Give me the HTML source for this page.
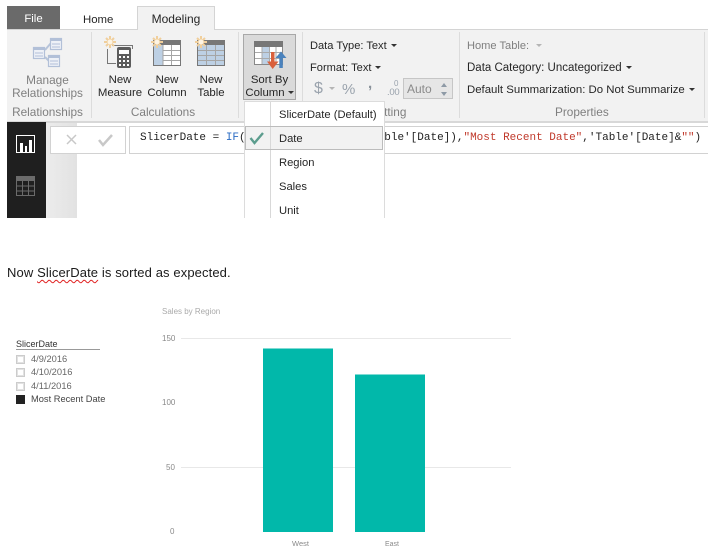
<!DOCTYPE html>
<html><head><meta charset="utf-8">
<style>
html,body{margin:0;padding:0;background:#fff;}
#p{position:relative;width:720px;height:555px;overflow:hidden;background:#fff;font-family:"Liberation Sans",sans-serif;font-size:11.4px;color:#262626;}
#p div{position:absolute;white-space:nowrap;}
.c{text-align:center;line-height:13px;}
.car{display:inline-block;width:0;height:0;border-left:3px solid transparent;border-right:3px solid transparent;border-top:3px solid #333;vertical-align:2px;margin-left:4px;}
.g{color:#7f7f7f;}
.ax{font-size:8px;color:#8a8a8a;}
.m{font-size:11.2px;z-index:5;}
.s{font-size:9.3px;color:#666;}
.b{width:9px;height:9px;border:1px solid #ccc;box-sizing:border-box;box-shadow:inset 0 0 0 1px #e2e2e2;}
svg{position:absolute;}
</style></head><body><div id="p">

<!-- tabs -->
<div style="left:7px;top:6px;width:53px;height:23px;background:#6a6a6a;color:#fff;line-height:26px;text-align:center;">File</div>
<div style="left:83px;top:14px;">Home</div>
<div style="left:137px;top:6px;width:78px;height:24px;background:#f2f2f2;border:1px solid #d4d4d4;border-bottom:none;box-sizing:border-box;line-height:25px;text-align:center;z-index:2;font-size:12px;">Modeling</div>

<!-- ribbon -->
<div style="left:7px;top:29px;width:701px;height:92px;background:#f2f2f2;border-top:1px solid #d4d4d4;box-sizing:border-box;"></div>
<div style="left:7px;top:121px;width:701px;height:2px;background:#d8d8d8;"></div>
<div style="left:91px;top:32px;width:1px;height:86px;background:#dcdcdc;"></div>
<div style="left:238px;top:32px;width:1px;height:86px;background:#dcdcdc;"></div>
<div style="left:302px;top:32px;width:1px;height:86px;background:#dcdcdc;"></div>
<div style="left:459px;top:32px;width:1px;height:86px;background:#dcdcdc;"></div>
<div style="left:704px;top:32px;width:1px;height:86px;background:#dcdcdc;"></div>

<!-- manage relationships icon -->
<svg style="left:30px;top:36px" width="36" height="34" viewBox="0 0 36 34">
<path d="M15 14 L21 7 M15 21 L20 26" stroke="#b7c4da" stroke-width="2" fill="none"/>
<g fill="#eef1f7" stroke="#b2c0d8" stroke-width="1.2">
<rect x="3.500" y="11.500" width="11" height="11"/><rect x="20.500" y="2.500" width="11" height="11"/><rect x="18.500" y="19.500" width="11" height="11"/></g>
<g fill="#b2c0d8"><rect x="3" y="11" width="12" height="3"/><rect x="20" y="2" width="12" height="3"/><rect x="18" y="19" width="12" height="3"/></g>
<path d="M5 17h8M5 20h8M22 8h8M22 11h8M20 25h8M20 28h8" stroke="#b2c0d8" stroke-width="1"/>
</svg>
<div class="c g" style="left:10px;top:74px;width:75px;font-size:11.8px;">Manage<br>Relationships</div>
<div class="c g" style="left:10px;top:106px;width:75px;font-size:11.8px;">Relationships</div>

<!-- new measure -->
<svg style="left:103px;top:35px" width="32" height="35" viewBox="0 0 32 35">
<path d="M4.500 14V28.500H13M9 10.500H29.500V14" fill="none" stroke="#777" stroke-width="1"/>
<rect x="14" y="12" width="14" height="21" rx="2" fill="#5c5c5c"/>
<rect x="16" y="15" width="10" height="4" fill="#fff"/>
<g fill="#fff"><rect x="16" y="21" width="2" height="2"/><rect x="20" y="21" width="2" height="2"/><rect x="24" y="21" width="2" height="2"/><rect x="16" y="25" width="2" height="2"/><rect x="20" y="25" width="2" height="2"/><rect x="24" y="25" width="2" height="2"/><rect x="16" y="29" width="2" height="2"/><rect x="20" y="29" width="2" height="2"/><rect x="24" y="29" width="2" height="2"/></g>
<g stroke="#f0cf9c" stroke-width="2" fill="none"><path d="M7 1V13M1 7H13M3 3L11 11M11 3L3 11"/></g><circle cx="7" cy="7" r="2.500" fill="#fdf4e4"/>
</svg>
<div class="c" style="left:96px;top:74px;width:48px;">New<br>Measure</div>

<!-- new column -->
<svg style="left:150px;top:35px" width="32" height="35" viewBox="0 0 32 35">
<rect x="3.500" y="5.500" width="27" height="25" fill="#fff" stroke="#777" stroke-width="1"/>
<rect x="3" y="5" width="28" height="5" fill="#777"/>
<rect x="4" y="10" width="9" height="20" fill="#bdd0e4"/>
<path d="M13 15.500H30M13 20.500H30M13 25.500H30M21.500 10V30M13 10V30" stroke="#a5a5a5" stroke-width="1"/>
<g stroke="#f0cf9c" stroke-width="2" fill="none"><path d="M7 1V13M1 7H13M3 3L11 11M11 3L3 11"/></g><circle cx="7" cy="7" r="2.500" fill="#fdf4e4"/>
</svg>
<div class="c" style="left:146px;top:74px;width:42px;">New<br>Column</div>

<!-- new table -->
<svg style="left:194px;top:35px" width="32" height="35" viewBox="0 0 32 35">
<rect x="3.500" y="5.500" width="27" height="25" fill="#bdd0e4" stroke="#777" stroke-width="1"/>
<rect x="3" y="5" width="28" height="5" fill="#777"/>
<path d="M4 15.500H30M4 20.500H30M4 25.500H30M12.500 10V30M21.500 10V30" stroke="#a5a5a5" stroke-width="1"/>
<g stroke="#f0cf9c" stroke-width="2" fill="none"><path d="M7 1V13M1 7H13M3 3L11 11M11 3L3 11"/></g><circle cx="7" cy="7" r="2.500" fill="#fdf4e4"/>
</svg>
<div class="c" style="left:190px;top:74px;width:42px;">New<br>Table</div>
<div class="c g" style="left:96px;top:106px;width:134px;font-size:11.8px;">Calculations</div>

<!-- sort by column -->
<div style="left:243px;top:34px;width:53px;height:66px;background:#dadada;border:1px solid #a8a8a8;box-sizing:border-box;"></div>
<svg style="left:250px;top:38px" width="44" height="36" viewBox="0 0 44 36">
<rect x="4.500" y="3.500" width="28" height="23" fill="#fff" stroke="#888"/>
<rect x="4" y="3" width="29" height="6" fill="#777"/>
<rect x="12" y="9" width="7" height="17" fill="#bdd0e4"/>
<path d="M5 14.500H32M5 20.500H32M12 9V26M19.500 9V26M26 9V26" stroke="#aaa"/>
<path d="M21 14H24.500V23.500H28.500L22.700 31L17 23.500H21Z" fill="#d9603c"/>
<path d="M29.300 30H32.800V20H36.500L31 13.500L25.500 20H29.300Z" fill="#4a82bd"/>
</svg>
<div class="c" style="left:243px;top:74px;width:53px;">Sort By<br>Column<span class="car" style="margin-left:3px"></span></div>

<!-- formatting -->
<div style="left:310px;top:40px;font-size:11.1px;">Data Type: Text<span class="car"></span></div>
<div style="left:310px;top:62px;font-size:11.1px;">Format: Text<span class="car"></span></div>
<div style="left:314px;top:80px;font-size:16px;color:#9aa3ad;">$</div>
<div style="left:329px;top:87px;width:0;height:0;border-left:3px solid transparent;border-right:3px solid transparent;border-top:3px solid #b5b5b5;"></div>
<div style="left:342px;top:81px;font-size:15px;color:#9aa3ad;">%</div>
<div style="left:368px;top:75px;font-size:15px;font-weight:bold;color:#8a929b;">,</div>
<div style="left:394px;top:79px;font-size:8px;color:#9aa3ad;">0</div>
<div style="left:387px;top:87px;font-size:9.5px;color:#9aa3ad;letter-spacing:-.3px;">.00</div>
<div style="left:403px;top:78px;width:50px;height:21px;background:#e6e6e6;border:1px solid #c6c6c6;box-sizing:border-box;color:#8a8a8a;line-height:20px;padding-left:3px;font-size:12px;">Auto</div>
<div style="left:441px;top:83px;width:0;height:0;border-left:3px solid transparent;border-right:3px solid transparent;border-bottom:4px solid #8e9aa6;"></div>
<div style="left:441px;top:92px;width:0;height:0;border-left:3px solid transparent;border-right:3px solid transparent;border-top:4px solid #8e9aa6;"></div>
<div class="g" style="left:350px;top:106px;font-size:11.8px;line-height:13px;">Formatting</div>

<!-- properties -->
<div class="g" style="left:467px;top:40px;font-size:11.1px;">Home Table:<span class="car" style="border-top-color:#b5b5b5;margin-left:7px"></span></div>
<div style="left:467px;top:62px;font-size:11.5px;">Data Category: Uncategorized<span class="car"></span></div>
<div style="left:467px;top:84px;font-size:11.4px;">Default Summarization: Do Not Summarize<span class="car"></span></div>
<div class="g" style="left:555px;top:106px;font-size:11.8px;line-height:13px;">Properties</div>

<!-- left area -->
<div style="left:7px;top:122px;width:39px;height:96px;background:#1f1f1f;"></div>
<div style="left:46px;top:123px;width:31px;height:95px;background:linear-gradient(90deg,#ececec,#e2e2e2);"></div>
<svg style="left:15px;top:134px" width="22" height="22" viewBox="0 0 22 22">
<rect x="1.500" y="1.500" width="18" height="17" fill="none" stroke="#fff"/>
<path d="M5 18V9H8V18ZM10 18V12H12V18ZM14 18V6H17V18Z" fill="#fff"/>
</svg>
<svg style="left:15px;top:175px" width="22" height="22" viewBox="0 0 22 22">
<rect x="1.500" y="1.500" width="18" height="19" fill="none" stroke="#6b6b6b"/>
<rect x="1" y="1" width="19" height="5" fill="#6b6b6b"/>
<path d="M2 11H19M2 16H19M7.500 6V20M13.500 6V20" stroke="#6b6b6b"/>
</svg>

<!-- formula bar -->
<div style="left:50px;top:126px;width:76px;height:28px;background:#fff;border:1px solid #d2d2d2;box-sizing:border-box;"></div>
<svg style="left:60px;top:130px" width="60" height="20" viewBox="0 0 60 20">
<path d="M7 5L16 14M16 5L7 14" stroke="#c8c8c8" stroke-width="1.500" fill="none"/>
<path d="M39 10L43 15L52 5" stroke="#c8c8c8" stroke-width="2.500" fill="none"/>
</svg>
<div style="left:129px;top:126px;width:579px;height:28px;background:#fff;border:1px solid #d2d2d2;border-right:none;box-sizing:border-box;"></div>
<div style="left:140px;top:131px;font-family:'Liberation Mono',monospace;font-size:11px;line-height:14px;color:#222;">SlicerDate = <span style="color:#2b6cc4">IF</span>('Table'[Date]=MAX('Table'[Date]),<span style="color:#c0392b">"Most Recent Date"</span>,'Table'[Date]&amp;<span style="color:#c0392b">""</span>)</div>

<!-- dropdown -->
<div style="left:244px;top:101px;width:141px;height:117px;background:#fff;border:1px solid #dcdcdc;border-bottom:none;box-sizing:border-box;z-index:3;"></div>
<div style="left:270px;top:102px;width:1px;height:116px;background:#d8d8d8;z-index:4;"></div>
<div style="left:245px;top:126px;width:138px;height:24px;background:#f2f2f2;border:1px solid #bcbcbc;box-sizing:border-box;z-index:4;"></div>
<div style="left:270px;top:127px;width:1px;height:22px;background:#d8d8d8;z-index:5;"></div>
<svg style="left:249px;top:130px;z-index:5" width="16" height="16" viewBox="0 0 16 16">
<path d="M1.500 8L5.500 13L14 3" stroke="#5c9d8e" stroke-width="2.400" fill="none"/>
</svg>
<div class="m" style="left:279px;top:109px;">SlicerDate (Default)</div>
<div class="m" style="left:279px;top:133px;">Date</div>
<div class="m" style="left:279px;top:157px;">Region</div>
<div class="m" style="left:279px;top:181px;">Sales</div>
<div class="m" style="left:279px;top:205px;">Unit</div>

<!-- sentence -->
<div style="left:7px;top:265px;font-size:13px;color:#1a1a1a;letter-spacing:.11px;">Now <span style="text-decoration:underline wavy #e02020 1px;text-underline-offset:2px;">SlicerDate</span> is sorted as expected.</div>

<!-- slicer -->
<div style="left:16px;top:339px;font-size:9px;color:#333;">SlicerDate</div>
<div style="left:16px;top:349px;width:84px;height:1px;background:#999;"></div>
<div class="b" style="left:16px;top:355px;"></div>
<div class="b" style="left:16px;top:368px;"></div>
<div class="b" style="left:16px;top:382px;"></div>
<div style="left:16px;top:395px;width:9px;height:9px;background:#222;"></div>
<div class="s" style="left:31px;top:354px;">4/9/2016</div>
<div class="s" style="left:31px;top:367px;">4/10/2016</div>
<div class="s" style="left:31px;top:381px;">4/11/2016</div>
<div class="s" style="left:31px;top:394px;color:#444;">Most Recent Date</div>

<!-- chart -->
<div style="left:162px;top:307px;font-size:8px;color:#aaa;">Sales by Region</div>
<div style="left:181px;top:338px;width:330px;height:1px;background:#e8e8e8;"></div>
<div style="left:181px;top:467px;width:330px;height:1px;background:#e8e8e8;"></div>
<div class="ax" style="left:162px;top:334px;">150</div>
<div class="ax" style="left:162px;top:398px;">100</div>
<div class="ax" style="left:166px;top:463px;">50</div>
<div class="ax" style="left:170px;top:527px;">0</div>
<div style="left:263px;top:348px;width:70px;height:184px;background:#01b8aa;border-top:1px solid #7fdbd4;box-sizing:border-box;"></div>
<div style="left:355px;top:374px;width:70px;height:158px;background:#01b8aa;border-top:1px solid #7fdbd4;box-sizing:border-box;"></div>
<div class="ax" style="left:292px;top:539px;font-size:7.5px;">West</div>
<div class="ax" style="left:385px;top:541px;font-size:7px;">East</div>
</div></body></html>
